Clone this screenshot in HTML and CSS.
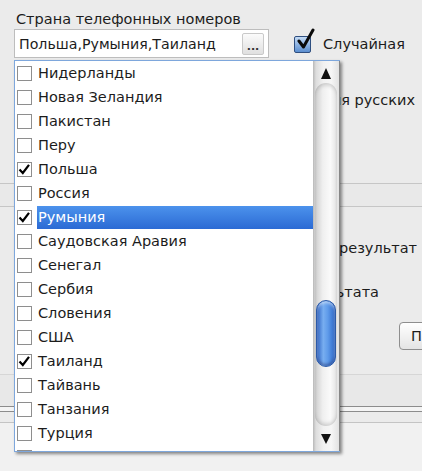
FILE: index.html
```html
<!DOCTYPE html>
<html lang="ru">
<head>
<meta charset="utf-8">
<title>Страна телефонных номеров</title>
<link rel="stylesheet" href="styles.css">
</head>
<body>
<div class="window">
  <div class="form">
    <div class="caption">Страна телефонных номеров</div>
    <div class="field-row">
      <div class="field">
        <span class="field-text">Польша,Румыния,Таиланд</span>
        <button class="dots">...</button>
      </div>
      <label class="big-check">
        <span class="big-box"><svg width="22" height="24" viewBox="0 0 22 24"><path d="M4 13 L8.5 19 L18 2" fill="none" stroke="#0a0a0a" stroke-width="3" stroke-linecap="round" stroke-linejoin="round"/></svg></span>
        <span>Случайная</span>
      </label>
    </div>
    <div class="bg-row r1">для русских</div>
    <div class="band"></div>
    <div class="bg-row r2">результат поиска</div>
    <div class="bg-row r3">результата</div>
    <div class="btn-row"><button class="btn">Проверить</button></div>
    <div class="footer">
      <div class="foot-a"></div>
      <div class="foot-b"></div>
      <div class="foot-c"></div>
    </div>
  </div>

  <div class="dropdown">
    <ul class="list">
      <li class="item"><span class="cb"></span><span class="lbl">Нидерланды</span></li>
      <li class="item"><span class="cb"></span><span class="lbl">Новая Зеландия</span></li>
      <li class="item"><span class="cb"></span><span class="lbl">Пакистан</span></li>
      <li class="item"><span class="cb"></span><span class="lbl">Перу</span></li>
      <li class="item"><span class="cb"><svg width="15" height="15" viewBox="0 0 15 15"><path d="M2.5 7.5 L5.8 11 L12 2.8" fill="none" stroke="#000" stroke-width="2.2"/></svg></span><span class="lbl">Польша</span></li>
      <li class="item"><span class="cb"></span><span class="lbl">Россия</span></li>
      <li class="item selected"><span class="cb"><svg width="15" height="15" viewBox="0 0 15 15"><path d="M2.5 7.5 L5.8 11 L12 2.8" fill="none" stroke="#000" stroke-width="2.2"/></svg></span><span class="lbl">Румыния</span></li>
      <li class="item"><span class="cb"></span><span class="lbl">Саудовская Аравия</span></li>
      <li class="item"><span class="cb"></span><span class="lbl">Сенегал</span></li>
      <li class="item"><span class="cb"></span><span class="lbl">Сербия</span></li>
      <li class="item"><span class="cb"></span><span class="lbl">Словения</span></li>
      <li class="item"><span class="cb"></span><span class="lbl">США</span></li>
      <li class="item"><span class="cb"><svg width="15" height="15" viewBox="0 0 15 15"><path d="M2.5 7.5 L5.8 11 L12 2.8" fill="none" stroke="#000" stroke-width="2.2"/></svg></span><span class="lbl">Таиланд</span></li>
      <li class="item"><span class="cb"></span><span class="lbl">Тайвань</span></li>
      <li class="item"><span class="cb"></span><span class="lbl">Танзания</span></li>
      <li class="item"><span class="cb"></span><span class="lbl">Турция</span></li>
      <li class="item"><span class="cb"></span><span class="lbl"></span></li>
    </ul>
    <div class="scroll">
      <div class="sb-btn sb-up"><span class="tri-up"></span></div>
      <div class="track"><div class="thumb" style="margin-top:217px;height:67px"></div></div>
      <div class="sb-btn sb-down"><span class="tri-down"></span></div>
    </div>
  </div>
</div>
</body>
</html>
```

FILE: styles.css
```css
* { box-sizing: border-box; }
html, body { margin: 0; padding: 0; }
body {
  width: 422px;
  height: 471px;
  overflow: hidden;
  background: #ebebeb;
  font-family: "DejaVu Sans", Verdana, sans-serif;
  font-size: 14.5px;
  color: #1c1c1c;
}
.window {
  position: relative;
  width: 422px;
  height: 471px;
  overflow: hidden;
}
.form {
  display: flex;
  flex-direction: column;
  padding-top: 11px;
}
.caption {
  line-height: 17px;
  padding-left: 16px;
  margin-bottom: 1px;
  white-space: nowrap;
}
.field-row {
  display: flex;
  align-items: center;
  padding-left: 14px;
}
.field {
  width: 255px;
  height: 29px;
  flex-shrink: 0;
  background: #fff;
  border: 1px solid #bdbdbd;
  display: flex;
  align-items: center;
  padding-left: 4px;
  padding-right: 4px;
}
.field-text {
  flex: 1;
  white-space: nowrap;
  overflow: hidden;
  font-size: 14.2px;
}
.dots {
  width: 22px;
  height: 22px;
  flex-shrink: 0;
  border: 1px solid #c9c9c9;
  border-radius: 2px;
  background: linear-gradient(#fbfbfb, #e0e0e0);
  font-family: "DejaVu Sans", sans-serif;
  font-weight: bold;
  font-size: 11px;
  color: #333;
  padding: 0;
  display: flex;
  align-items: flex-end;
  justify-content: center;
  line-height: 14px;
}
.big-check {
  display: flex;
  align-items: center;
  margin-left: 25px;
  gap: 12px;
  white-space: nowrap;
  flex-shrink: 0;
}
.big-box {
  position: relative;
  flex-shrink: 0;
  display: block;
  width: 17px;
  height: 17px;
  border: 1px solid #2f4f80;
  border-radius: 2px;
  background: linear-gradient(#c4dbf5, #5b8ed0);
  margin-top: 2px;
}
.big-box svg {
  position: absolute;
  left: 0;
  top: -9px;
}
.bg-row {
  height: 24px;
  line-height: 24px;
  white-space: nowrap;
}
.r1 { margin-top: 30px; text-align: right; padding-right: 7px; }
.band {
  margin-top: 71px;
  height: 24px;
  border-top: 1px solid #c6c6c6;
  border-bottom: 1px solid #c6c6c6;
  background: #e9e9e9;
}
.r2 { margin-top: 29px; padding-left: 339px; overflow: hidden; }
.r3 { margin-top: 20px; text-align: right; padding-right: 43px; }
.btn-row {
  margin-top: 18px;
  padding-left: 399px;
  display: flex;
  overflow: hidden;
}
.btn {
  height: 28px;
  padding: 0 11px;
  border: 1px solid #8e8e8e;
  border-radius: 4px;
  background: linear-gradient(#ffffff, #e4e4e4);
  font-family: "DejaVu Sans", sans-serif;
  font-size: 14.5px;
  color: #1c1c1c;
  white-space: nowrap;
  flex-shrink: 0;
}
.footer { margin-top: 24px; }
.foot-a {
  height: 32px;
  border-top: 1px solid #d6d6d6;
  background: #e8e8e8;
}
.foot-b {
  height: 6px;
  border-top: 1px solid #8c8c8c;
  border-bottom: 1px solid #8c8c8c;
  background: #f4f4f4;
}
.foot-c {
  height: 60px;
  margin-top: 10px;
  border-top: 1px solid #c4c4c4;
  background: #f1f1f1;
}

/* dropdown */
.dropdown {
  position: absolute;
  left: 14px;
  top: 60px;
  width: 326px;
  height: 392px;
  display: flex;
  border-top: 1px solid #7ea7dc;
  border-left: 1px solid #7ea7dc;
  border-bottom: 1px solid #7ea7dc;
  background: #fff;
  box-shadow: 2px 2px 3px rgba(0, 0, 0, 0.45);
}
.list {
  list-style: none;
  margin: 0;
  padding: 0;
  width: 298px;
  overflow: hidden;
}
.item {
  height: 24px;
  display: flex;
  align-items: center;
  padding-left: 2px;
}
.cb {
  width: 15px;
  height: 15px;
  border: 1px solid #8e8e8e;
  background: #fff;
  flex-shrink: 0;
  position: relative;
}
.cb svg { position: absolute; left: -1px; top: -1px; }
.lbl {
  flex: 1;
  margin-left: 5px;
  padding-left: 1px;
  height: 23px;
  line-height: 23px;
  white-space: nowrap;
}
.selected .lbl {
  background: linear-gradient(#4c92ec, #2b6ad4);
  color: #fff;
}
.scroll {
  width: 27px;
  display: flex;
  flex-direction: column;
  border-right: 1px solid #868686;
  background: linear-gradient(90deg, #b8b8b8 0, #dddddd 3px, #f1f1f1 40%, #f6f6f6 70%, #e2e2e2 100%);
}
.sb-btn {
  display: flex;
  justify-content: center;
}
.sb-up { height: 22px; padding-top: 7px; }
.sb-down { height: 25px; padding-top: 8px; }
.tri-up {
  width: 0; height: 0;
  border-left: 5px solid transparent;
  border-right: 5px solid transparent;
  border-bottom: 11px solid #111;
}
.tri-down {
  width: 0; height: 0;
  border-left: 5px solid transparent;
  border-right: 5px solid transparent;
  border-top: 10px solid #111;
}
.track {
  flex: 1;
  margin: 0 2px;
  border-radius: 11px;
  background: linear-gradient(90deg, #cdcdcd, #efefef 35%, #fafafa 70%, #e2e2e2);
  box-shadow: inset 0 4px 4px -2px rgba(0, 0, 0, 0.18), inset 0 -4px 4px -2px rgba(0, 0, 0, 0.18);
  display: flex;
  flex-direction: column;
  align-items: center;
}
.thumb {
  width: 20px;
  border: 1px solid #2b5aa8;
  border-radius: 10px;
  background: linear-gradient(90deg, #2e64c4 0, #78aef0 35%, #5f9bea 60%, #2d68c9 100%);
  box-shadow: inset 0 2px 3px rgba(255, 255, 255, 0.5), inset 0 -2px 3px rgba(0, 0, 60, 0.35);
}
```
